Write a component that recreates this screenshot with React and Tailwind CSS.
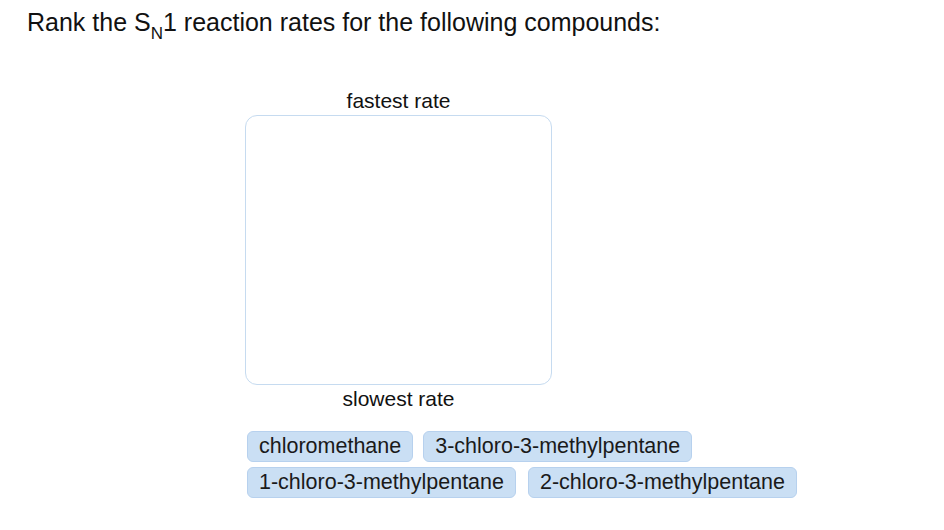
export default function App() {
  const chips1 = ["chloromethane", "3-chloro-3-methylpentane"];
  const chips2 = ["1-chloro-3-methylpentane", "2-chloro-3-methylpentane"];
  const Chip = ({ t }) => (
    <div className="h-[31px] px-[11px] flex items-center rounded-[6px] bg-[#cadff4] border border-[#b7d1ee] text-[21.5px] text-[#1a1a1a] leading-none">
      {t}
    </div>
  );
  return (
    <div className="w-[944px] h-[530px] bg-white font-['Liberation_Sans',Arial,sans-serif] text-[#111] overflow-hidden">
      <div className="pt-[7px] pl-[27px] text-[25px] leading-[30px]">
        Rank the S<sub className="text-[17px] align-[-4px] leading-none">N</sub>1 reaction rates for the following compounds:
      </div>
      <div className="ml-[245px] mt-[50px] w-[307px] flex flex-col items-center">
        <div className="text-[21px] leading-[26px] mb-[1px]">fastest rate</div>
        <div className="w-[307px] h-[270px] border border-[#c6dbf0] rounded-[12px]"></div>
        <div className="text-[21px] leading-[26px] mt-[1px]">slowest rate</div>
      </div>
      <div className="ml-[247px] mt-[19px] flex flex-col gap-[5px]">
        <div className="flex gap-[10px]">
          {chips1.map((t) => <Chip key={t} t={t} />)}
        </div>
        <div className="flex gap-[12px]">
          {chips2.map((t) => <Chip key={t} t={t} />)}
        </div>
      </div>
    </div>
  );
}
